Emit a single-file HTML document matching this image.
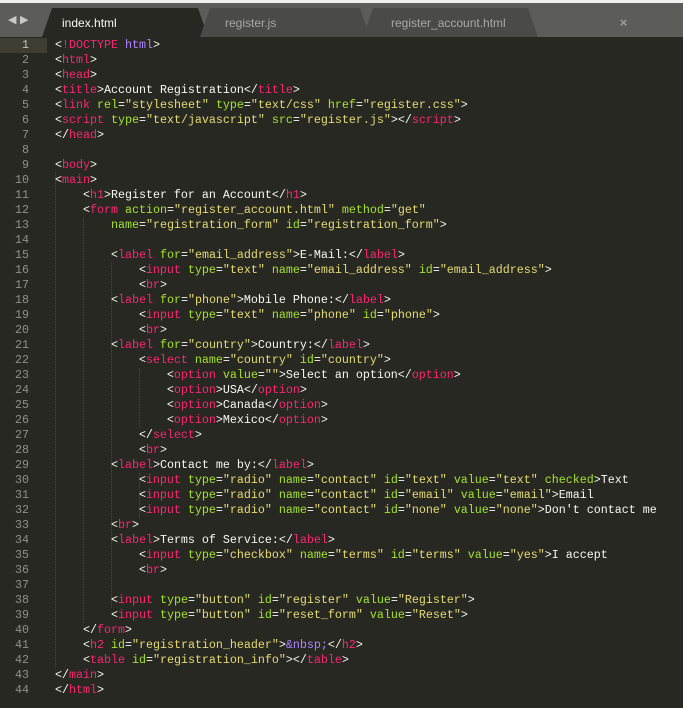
<!DOCTYPE html>
<html><head><style>
body{margin:0;width:683px;height:708px;background:#272822;overflow:hidden;position:relative;font-family:"Liberation Mono",monospace;}
#top{position:absolute;left:0;top:0;width:683px;height:3px;background:#f0f0f0}
#bar{position:absolute;left:0;top:3px;width:683px;height:34px;background:#5c5c59}
.tab{position:absolute;top:8px;height:29px;font-family:"Liberation Sans",sans-serif;font-size:12px;line-height:29px;color:#a9a9a4}
.tab .bg{position:absolute;inset:0;background:#4a4a46;clip-path:polygon(10px 0,calc(100% - 10px) 0,100% 100%,0 100%);}
.tab span{position:relative}
.x{position:absolute;font-size:13px;color:#a0a09a;font-weight:bold}
.ln{position:absolute;left:0;width:29px;text-align:right;color:#8f908a;font-size:11.67px;height:15px;line-height:15px}
.cl{position:absolute;left:55px;white-space:pre;color:#f8f8f2;font-size:11.67px;height:15px;line-height:15px}
b{color:#f92672;font-weight:normal}i{color:#a6e22e;font-style:normal}u{color:#e6db74;text-decoration:none}em{color:#ae81ff;font-style:normal}
.g{position:absolute;width:0;border-left:1px dotted #4a4a44}
</style></head><body>
<div id="top"></div><div id="bar"></div>
<div style="position:absolute;left:8px;top:13px;color:#c8c8c4;font-size:11px;font-family:'DejaVu Sans'">◀ ▶</div>
<div class="tab" style="left:42px;width:166px"><div class="bg" style="background:#272822"></div><span style="left:20px;color:#f8f8f2">index.html</span><span class="x" style="left:137px;top:0">×</span></div>
<div class="tab" style="left:200px;width:170px"><div class="bg"></div><span style="left:25px">register.js</span><span class="x" style="left:143px;top:0">×</span></div>
<div class="tab" style="left:363px;width:175px"><div class="bg"></div><span style="left:28px">register_account.html</span><span class="x" style="left:142px;top:0">×</span></div>
<div style="position:absolute;left:0;top:38px;width:47px;height:15px;background:#3e3d32"></div>
<div class="g" style="left:55px;top:173px;height:495px"></div>
<div class="g" style="left:83px;top:218px;height:405px"></div>
<div class="g" style="left:111px;top:263px;height:345px"></div>
<div class="g" style="left:139px;top:368px;height:60px"></div>
<div class="g" style="left:139px;top:473px;height:45px"></div>
<div id="c"></div>
<div class="ln" style="top:38px;color:#c2c2bf">1</div><div class="cl" style="top:38px">&lt;<b>!DOCTYPE</b> <em>html</em>&gt;</div>
<div class="ln" style="top:53px">2</div><div class="cl" style="top:53px">&lt;<b>html</b>&gt;</div>
<div class="ln" style="top:68px">3</div><div class="cl" style="top:68px">&lt;<b>head</b>&gt;</div>
<div class="ln" style="top:83px">4</div><div class="cl" style="top:83px">&lt;<b>title</b>&gt;Account Registration&lt;/<b>title</b>&gt;</div>
<div class="ln" style="top:98px">5</div><div class="cl" style="top:98px">&lt;<b>link</b> <i>rel</i>=<u>"stylesheet"</u> <i>type</i>=<u>"text/css"</u> <i>href</i>=<u>"register.css"</u>&gt;</div>
<div class="ln" style="top:113px">6</div><div class="cl" style="top:113px">&lt;<b>script</b> <i>type</i>=<u>"text/javascript"</u> <i>src</i>=<u>"register.js"</u>&gt;&lt;/<b>script</b>&gt;</div>
<div class="ln" style="top:128px">7</div><div class="cl" style="top:128px">&lt;/<b>head</b>&gt;</div>
<div class="ln" style="top:143px">8</div>
<div class="ln" style="top:158px">9</div><div class="cl" style="top:158px">&lt;<b>body</b>&gt;</div>
<div class="ln" style="top:173px">10</div><div class="cl" style="top:173px">&lt;<b>main</b>&gt;</div>
<div class="ln" style="top:188px">11</div><div class="cl" style="top:188px">    &lt;<b>h1</b>&gt;Register for an Account&lt;/<b>h1</b>&gt;</div>
<div class="ln" style="top:203px">12</div><div class="cl" style="top:203px">    &lt;<b>form</b> <i>action</i>=<u>"register_account.html"</u> <i>method</i>=<u>"get"</u></div>
<div class="ln" style="top:218px">13</div><div class="cl" style="top:218px">        <i>name</i>=<u>"registration_form"</u> <i>id</i>=<u>"registration_form"</u>&gt;</div>
<div class="ln" style="top:233px">14</div>
<div class="ln" style="top:248px">15</div><div class="cl" style="top:248px">        &lt;<b>label</b> <i>for</i>=<u>"email_address"</u>&gt;E-Mail:&lt;/<b>label</b>&gt;</div>
<div class="ln" style="top:263px">16</div><div class="cl" style="top:263px">            &lt;<b>input</b> <i>type</i>=<u>"text"</u> <i>name</i>=<u>"email_address"</u> <i>id</i>=<u>"email_address"</u>&gt;</div>
<div class="ln" style="top:278px">17</div><div class="cl" style="top:278px">            &lt;<b>br</b>&gt;</div>
<div class="ln" style="top:293px">18</div><div class="cl" style="top:293px">        &lt;<b>label</b> <i>for</i>=<u>"phone"</u>&gt;Mobile Phone:&lt;/<b>label</b>&gt;</div>
<div class="ln" style="top:308px">19</div><div class="cl" style="top:308px">            &lt;<b>input</b> <i>type</i>=<u>"text"</u> <i>name</i>=<u>"phone"</u> <i>id</i>=<u>"phone"</u>&gt;</div>
<div class="ln" style="top:323px">20</div><div class="cl" style="top:323px">            &lt;<b>br</b>&gt;</div>
<div class="ln" style="top:338px">21</div><div class="cl" style="top:338px">        &lt;<b>label</b> <i>for</i>=<u>"country"</u>&gt;Country:&lt;/<b>label</b>&gt;</div>
<div class="ln" style="top:353px">22</div><div class="cl" style="top:353px">            &lt;<b>select</b> <i>name</i>=<u>"country"</u> <i>id</i>=<u>"country"</u>&gt;</div>
<div class="ln" style="top:368px">23</div><div class="cl" style="top:368px">                &lt;<b>option</b> <i>value</i>=<u>""</u>&gt;Select an option&lt;/<b>option</b>&gt;</div>
<div class="ln" style="top:383px">24</div><div class="cl" style="top:383px">                &lt;<b>option</b>&gt;USA&lt;/<b>option</b>&gt;</div>
<div class="ln" style="top:398px">25</div><div class="cl" style="top:398px">                &lt;<b>option</b>&gt;Canada&lt;/<b>option</b>&gt;</div>
<div class="ln" style="top:413px">26</div><div class="cl" style="top:413px">                &lt;<b>option</b>&gt;Mexico&lt;/<b>option</b>&gt;</div>
<div class="ln" style="top:428px">27</div><div class="cl" style="top:428px">            &lt;/<b>select</b>&gt;</div>
<div class="ln" style="top:443px">28</div><div class="cl" style="top:443px">            &lt;<b>br</b>&gt;</div>
<div class="ln" style="top:458px">29</div><div class="cl" style="top:458px">        &lt;<b>label</b>&gt;Contact me by:&lt;/<b>label</b>&gt;</div>
<div class="ln" style="top:473px">30</div><div class="cl" style="top:473px">            &lt;<b>input</b> <i>type</i>=<u>"radio"</u> <i>name</i>=<u>"contact"</u> <i>id</i>=<u>"text"</u> <i>value</i>=<u>"text"</u> <i>checked</i>&gt;Text</div>
<div class="ln" style="top:488px">31</div><div class="cl" style="top:488px">            &lt;<b>input</b> <i>type</i>=<u>"radio"</u> <i>name</i>=<u>"contact"</u> <i>id</i>=<u>"email"</u> <i>value</i>=<u>"email"</u>&gt;Email</div>
<div class="ln" style="top:503px">32</div><div class="cl" style="top:503px">            &lt;<b>input</b> <i>type</i>=<u>"radio"</u> <i>name</i>=<u>"contact"</u> <i>id</i>=<u>"none"</u> <i>value</i>=<u>"none"</u>&gt;Don't contact me</div>
<div class="ln" style="top:518px">33</div><div class="cl" style="top:518px">        &lt;<b>br</b>&gt;</div>
<div class="ln" style="top:533px">34</div><div class="cl" style="top:533px">        &lt;<b>label</b>&gt;Terms of Service:&lt;/<b>label</b>&gt;</div>
<div class="ln" style="top:548px">35</div><div class="cl" style="top:548px">            &lt;<b>input</b> <i>type</i>=<u>"checkbox"</u> <i>name</i>=<u>"terms"</u> <i>id</i>=<u>"terms"</u> <i>value</i>=<u>"yes"</u>&gt;I accept</div>
<div class="ln" style="top:563px">36</div><div class="cl" style="top:563px">            &lt;<b>br</b>&gt;</div>
<div class="ln" style="top:578px">37</div>
<div class="ln" style="top:593px">38</div><div class="cl" style="top:593px">        &lt;<b>input</b> <i>type</i>=<u>"button"</u> <i>id</i>=<u>"register"</u> <i>value</i>=<u>"Register"</u>&gt;</div>
<div class="ln" style="top:608px">39</div><div class="cl" style="top:608px">        &lt;<b>input</b> <i>type</i>=<u>"button"</u> <i>id</i>=<u>"reset_form"</u> <i>value</i>=<u>"Reset"</u>&gt;</div>
<div class="ln" style="top:623px">40</div><div class="cl" style="top:623px">    &lt;/<b>form</b>&gt;</div>
<div class="ln" style="top:638px">41</div><div class="cl" style="top:638px">    &lt;<b>h2</b> <i>id</i>=<u>"registration_header"</u>&gt;<em>&amp;nbsp;</em>&lt;/<b>h2</b>&gt;</div>
<div class="ln" style="top:653px">42</div><div class="cl" style="top:653px">    &lt;<b>table</b> <i>id</i>=<u>"registration_info"</u>&gt;&lt;/<b>table</b>&gt;</div>
<div class="ln" style="top:668px">43</div><div class="cl" style="top:668px">&lt;/<b>main</b>&gt;</div>
<div class="ln" style="top:683px">44</div><div class="cl" style="top:683px">&lt;/<b>html</b>&gt;</div>
</body></html>
